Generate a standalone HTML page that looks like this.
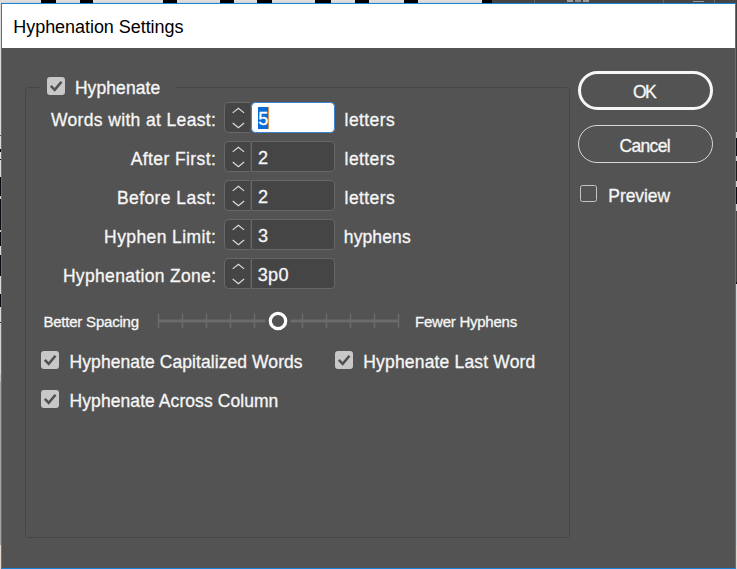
<!DOCTYPE html>
<html lang="en">
<head>
<meta charset="utf-8">
<title>Hyphenation Settings</title>
<style>
*{box-sizing:border-box;margin:0;padding:0}
html,body{width:737px;height:569px;overflow:hidden;background:#535353}
body{position:relative;font-family:"Liberation Sans",sans-serif;color:#f6f6f6;-webkit-text-stroke:0.3px;font-size:17px;line-height:20px}
.abs{position:absolute}
#topstrip{left:0;top:0;width:737px;height:3px;background:linear-gradient(#e2e2e2,#d2d2d2)}
#topstrip i{position:absolute;top:0;height:3px;background:#000}
#leftcol{left:0;top:0;width:1px;height:569px;background:linear-gradient(#dadada 0px,#dadada 135px,#555 135px,#555 136px,#dadada 136px,#dadada 149.5px,#0a0a12 149.5px,#0a0a12 151.6px,#e2e2e2 151.6px,#e2e2e2 159.4px,#0a0a12 159.4px,#0a0a12 160.5px,#dadada 160.5px,#dadada 177px,#0a0a12 177px,#0a0a12 196px,#ccc 196px,#ccc 199px,#0a0a12 199px,#0a0a12 229.7px,#ccc 229.7px,#ccc 231.8px,#0a0a12 231.8px,#0a0a12 246.5px,#dadada 246.5px,#dadada 255px,#0a0a12 255px,#0a0a12 275.8px,#dadada 275.8px,#dadada 293.8px,#0a0a12 293.8px,#0a0a12 307.5px,#dadada 307.5px,#dadada 322.2px,#222 322.2px,#222 323.3px,#d4d4d4 323.3px,#d4d4d4 374px,#bdbdbd 374px,#bdbdbd 382px,#a2a2a2 382px,#a2a2a2 545px,#e4dad2 545px,#e4dad2 569px)}
#rightcol{left:736px;top:0;width:1px;height:569px;background:linear-gradient(#424242 0px,#424242 131.6px,#d0d0d0 131.6px,#d0d0d0 138px,#0a0a12 138px,#0a0a12 155.9px,#d0d0d0 155.9px,#d0d0d0 161px,#1c1c1c 161px,#1c1c1c 181px,#d0d0d0 181px,#d0d0d0 187.5px,#0a0a12 187.5px,#0a0a12 204.4px,#d0d0d0 204.4px,#d0d0d0 210.7px,#454545 210.7px,#454545 282px,#111 282px,#111 284px,#d4d6da 284px,#d4d6da 545px,#e2dad2 545px,#e2dad2 569px)}
#dlg{left:1px;top:3px;width:735px;height:566px;border:1px solid #1883d7;background:#535353}
#titlebar{left:2px;top:4px;width:733px;height:44px;background:#fff}
#title{-webkit-text-stroke:0;left:13px;top:15px;font-size:18px;line-height:24px;height:24px;color:#000;white-space:nowrap;transform:scaleY(1.05);transform-origin:0 18px}
.t{white-space:nowrap;font-size:17.5px;line-height:20px;height:20px;transform:scaleY(1.06);transform-origin:0 16px}
.cb{width:18px;height:18px;border-radius:3px;background:#c8c8c8}
.cb svg{position:absolute;left:0;top:0}
.spin{left:224px;width:26px;height:31px;border:1px solid #686868;border-right:none;border-radius:5px 0 0 5px;background:#454545}
.d{font-size:18.1px;transform:none}
.spin svg{position:absolute;left:0;top:0}
.inp{left:251px;width:84px;height:31px;border:1px solid #676767;border-radius:0 4px 4px 0;background:#454545}
.inp.focus{background:#fff;border:1.8px solid #3b83d0;border-radius:4.5px}
</style>
</head>
<body>
<div class="abs" id="topstrip">
<i style="left:41px;width:15px"></i><i style="left:80px;width:13px"></i><i style="left:163px;width:14px"></i><i style="left:220px;width:14px"></i><i style="left:257px;width:15px"></i><i style="left:315px;width:16px"></i><i style="left:355px;width:14px"></i><i style="left:404px;width:14px"></i><i style="left:482px;width:10px"></i>
<i style="left:492px;width:245px;background:#454545"></i><i style="left:534px;width:1px;background:#666"></i><i style="left:663px;width:1px;background:#666"></i><i style="left:714px;width:1px;background:#666"></i>
<i style="left:567px;width:6px;height:2px;background:#9c9c9c"></i><i style="left:575px;width:6px;height:2px;background:#8c8c8c"></i><i style="left:583px;width:6px;height:2px;background:#9c9c9c"></i><i style="left:693px;width:11px;top:1px;height:1px;background:#999"></i>
</div>
<div class="abs" id="leftcol"></div>
<div class="abs" id="rightcol"></div>
<div class="abs" id="dlg"></div>
<div class="abs" id="titlebar"></div>
<div class="abs" id="title" style="letter-spacing:-0.05px;left:13.3px;top:15.0px">Hyphenation Settings</div>

<!-- group frame -->
<svg class="abs" style="left:0;top:0" width="737" height="569" viewBox="0 0 737 569" fill="none">
<path d="M41 87.5H28.5a3 3 0 0 0-3 3V534.5a3 3 0 0 0 3 3H566.5a3 3 0 0 0 3-3V90.5a3 3 0 0 0-3-3H175" stroke="#464646" stroke-width="1"/>
</svg>

<!-- Hyphenate checkbox -->
<div class="abs cb" style="left:47px;top:77px"><svg width="18" height="18" viewBox="0 0 18 18"><path d="M3.8 8.9l3.9 4 6.8-8.2" fill="none" stroke="#505050" stroke-width="2.5"/></svg></div>
<div class="abs t" id="hyph" style="left:74.9px;top:78.0px;letter-spacing:0.09px">Hyphenate</div>

<!-- rows -->
<div id="l1" class="abs t" style="left:50.9px;top:110.0px;letter-spacing:0.36px">Words with at Least:</div>
<div id="l2" class="abs t" style="left:130.7px;top:149.0px;letter-spacing:0.41px">After First:</div>
<div id="l3" class="abs t" style="left:116.9px;top:188.0px;letter-spacing:0.43px">Before Last:</div>
<div id="l4" class="abs t" style="left:104.1px;top:227.0px;letter-spacing:0.40px">Hyphen Limit:</div>
<div id="l5" class="abs t" style="left:62.9px;top:266.0px;letter-spacing:0.33px">Hyphenation Zone:</div>

<div class="abs spin" style="top:102px"><svg width="27" height="31" viewBox="0 0 27 31"><path d="M7.7 9.9L13.4 5.2 19.1 9.9M7.7 20L13.4 24.7 19.1 20" fill="none" stroke="#dcdcdc" stroke-width="1.15"/></svg></div>
<div class="abs inp focus" style="top:102px"></div>
<div class="abs" style="left:258px;top:107px;width:10px;height:22px;background:#0a6cd6"></div>
<div class="abs" style="left:268px;top:107px;width:1px;height:22px;background:#d98d45"></div>
<div id="d1" class="abs t d" style="left:258.2px;top:109.0px;color:#fff">5</div>
<div id="u1" class="abs t" style="left:344.6px;top:110.0px;letter-spacing:0.40px">letters</div>

<div class="abs spin" style="top:141px"><svg width="27" height="31" viewBox="0 0 27 31"><path d="M7.7 9.9L13.4 5.2 19.1 9.9M7.7 20L13.4 24.7 19.1 20" fill="none" stroke="#dcdcdc" stroke-width="1.15"/></svg></div>
<div class="abs inp" style="top:141px"></div>
<div id="d2" class="abs t d" style="left:258.0px;top:148.0px">2</div>
<div id="u2" class="abs t" style="left:344.6px;top:149.0px;letter-spacing:0.40px">letters</div>

<div class="abs spin" style="top:180px"><svg width="27" height="31" viewBox="0 0 27 31"><path d="M7.7 9.9L13.4 5.2 19.1 9.9M7.7 20L13.4 24.7 19.1 20" fill="none" stroke="#dcdcdc" stroke-width="1.15"/></svg></div>
<div class="abs inp" style="top:180px"></div>
<div id="d3" class="abs t d" style="left:258.0px;top:187.0px">2</div>
<div id="u3" class="abs t" style="left:344.6px;top:188.0px;letter-spacing:0.40px">letters</div>

<div class="abs spin" style="top:219px"><svg width="27" height="31" viewBox="0 0 27 31"><path d="M7.7 9.9L13.4 5.2 19.1 9.9M7.7 20L13.4 24.7 19.1 20" fill="none" stroke="#dcdcdc" stroke-width="1.15"/></svg></div>
<div class="abs inp" style="top:219px"></div>
<div id="d4" class="abs t d" style="left:258.0px;top:226.0px">3</div>
<div id="u4" class="abs t" style="left:343.8px;top:227.0px;letter-spacing:0.12px">hyphens</div>

<div class="abs spin" style="top:258px"><svg width="27" height="31" viewBox="0 0 27 31"><path d="M7.7 9.9L13.4 5.2 19.1 9.9M7.7 20L13.4 24.7 19.1 20" fill="none" stroke="#dcdcdc" stroke-width="1.15"/></svg></div>
<div class="abs inp" style="top:258px"></div>
<div id="d5" class="abs t d" style="left:257.8px;top:265.0px;letter-spacing:0.24px">3p0</div>

<!-- slider -->
<div id="better" class="abs t" style="left:43.4px;top:312.0px;font-size:15px;transform:none;letter-spacing:-0.21px">Better Spacing</div>
<svg class="abs" style="left:150px;top:305px" width="260" height="32" viewBox="0 0 260 32">
<g stroke="#6b6b6b" fill="none">
<path d="M8 16H248" stroke-width="2.8"/>
<path d="M8.5 8.5v15M32.5 8.5v15M56.5 8.5v15M80.5 8.5v15M104.5 8.5v15M152.5 8.5v15M176.5 8.5v15M200.5 8.5v15M224.5 8.5v15M248.5 8.5v15" stroke-width="1.5"/>
</g>
<circle cx="128" cy="16" r="12.4" fill="#535353"/>
<circle cx="128" cy="16" r="7.7" fill="#535353" stroke="#ffffff" stroke-width="3.2"/>
</svg>
<div id="fewer" class="abs t" style="left:415.1px;top:312.0px;font-size:15px;transform:none;letter-spacing:-0.25px">Fewer Hyphens</div>

<!-- bottom checkboxes -->
<div class="abs cb" style="left:41px;top:351px"><svg width="18" height="18" viewBox="0 0 18 18"><path d="M3.8 8.9l3.9 4 6.8-8.2" fill="none" stroke="#505050" stroke-width="2.5"/></svg></div>
<div id="capw" class="abs t" style="left:69.6px;top:352.0px;letter-spacing:0.07px">Hyphenate Capitalized Words</div>
<div class="abs cb" style="left:335px;top:351px"><svg width="18" height="18" viewBox="0 0 18 18"><path d="M3.8 8.9l3.9 4 6.8-8.2" fill="none" stroke="#505050" stroke-width="2.5"/></svg></div>
<div id="lastw" class="abs t" style="left:363.3px;top:352.0px;letter-spacing:0.17px">Hyphenate Last Word</div>
<div class="abs cb" style="left:41px;top:390px"><svg width="18" height="18" viewBox="0 0 18 18"><path d="M3.8 8.9l3.9 4 6.8-8.2" fill="none" stroke="#505050" stroke-width="2.5"/></svg></div>
<div id="across" class="abs t" style="left:69.6px;top:391.0px;letter-spacing:0.07px">Hyphenate Across Column</div>

<!-- buttons -->
<div class="abs" style="left:577.7px;top:70.5px;width:135.6px;height:39.3px;border:3px solid #f6f6f6;border-radius:20px"></div>
<div id="ok" class="abs t" style="left:633.1px;top:82.0px;letter-spacing:-1.75px">OK</div>
<div class="abs" style="left:577.7px;top:124.6px;width:135.6px;height:38.8px;border:1.3px solid #d6d6d6;border-radius:20px"></div>
<div id="cancel" class="abs t" style="left:619.4px;top:136.0px;letter-spacing:-0.63px">Cancel</div>
<div class="abs" style="left:579.8px;top:184.9px;width:17.6px;height:17.5px;border:1.2px solid #c4c4c4;border-radius:2.5px"></div>
<div id="preview" class="abs t" style="left:608.3px;top:186.0px;letter-spacing:-0.07px">Preview</div>
</body>
</html>
